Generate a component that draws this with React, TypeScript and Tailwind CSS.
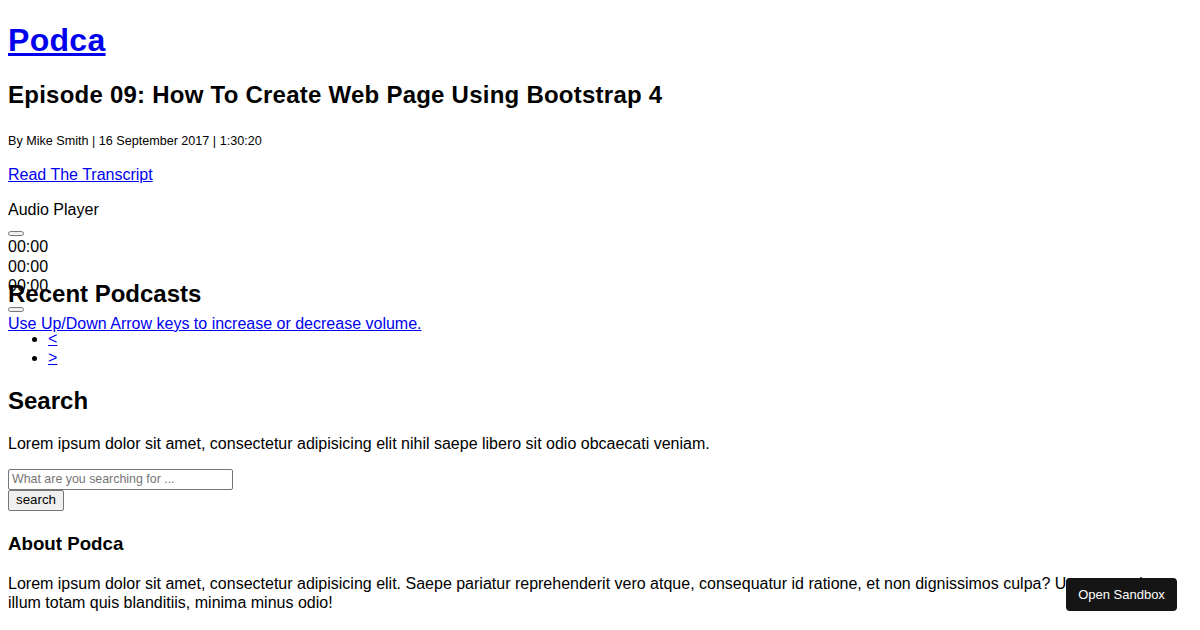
import React from "react";

export default function App() {
  return (
    <div className="px-2 font-['Liberation_Sans',Arial,sans-serif] text-[16px] leading-[1.2] text-black bg-white min-h-[630px]">
      <h1 className="text-[32px] font-bold my-[21.44px] tracking-[0.3px]">
        <a href="#" className="text-[#0000EE] underline">Podca</a>
      </h1>
      <h2 className="text-[24px] font-bold my-[19.92px] tracking-[0.24px]">Episode 09: How To Create Web Page Using Bootstrap 4</h2>
      <p className="my-4"><small className="text-[12.6px]">By Mike Smith | 16 September 2017 | 1:30:20</small></p>
      <p className="my-4"><a href="#" className="text-[#0000EE] underline">Read The Transcript</a></p>
      <p className="my-4">Audio Player</p>
      <div className="h-[29px]">
        <button className="block w-[16px] h-[5px] border border-[#767676] rounded-[3px] bg-[#efefef] mt-[-4.6px]"></button>
        <div className="mt-[1.4px]">00:00</div>
        <div>00:00</div>
        <div>00:00</div>
        <button className="block w-[16px] h-[5px] border border-[#767676] rounded-[3px] bg-[#efefef] mt-[12px]"></button>
        <a href="#" className="block w-fit mt-[2px] text-[#0000EE] underline">Use Up/Down Arrow keys to increase or decrease volume.</a>
      </div>
      <h2 className="text-[24px] font-bold my-[19.92px]">Recent Podcasts</h2>
      <ul className="list-disc pl-10 my-4">
        <li><a href="#" className="text-[#0000EE] underline">&lt;</a></li>
        <li><a href="#" className="text-[#0000EE] underline">&gt;</a></li>
      </ul>
      <h2 className="text-[24px] font-bold mt-[19.92px] mb-[18px]">Search</h2>
      <p className="mt-[18px] mb-4">Lorem ipsum dolor sit amet, consectetur adipisicing elit nihil saepe libero sit odio obcaecati veniam.</p>
      <form className="my-4">
        <input
          type="text"
          placeholder="What are you searching for ..."
          className="block w-[225px] h-[21px] border border-[#767676] rounded-[2px] px-[3px] text-[12.4px] placeholder:text-[#757575] bg-white"
        />
        <button type="button" className="block h-[21px] px-[7px] border border-[#767676] rounded-[2px] bg-[#efefef] text-[13.33px]">search</button>
      </form>
      <h3 className="text-[18.72px] font-bold mt-[22px] mb-[19px]">About Podca</h3>
      <p className="my-4 leading-[19px]">Lorem ipsum dolor sit amet, consectetur adipisicing elit. Saepe pariatur reprehenderit vero atque, consequatur id ratione, et non dignissimos culpa? Ut accusantium illum totam quis blanditiis, minima minus odio!</p>
      <button className="fixed right-[23px] bottom-[19px] w-[111px] h-[33px] rounded-[4px] bg-[#151515] text-white text-[13px] font-['Liberation_Sans',Arial,sans-serif]">Open Sandbox</button>
    </div>
  );
}
